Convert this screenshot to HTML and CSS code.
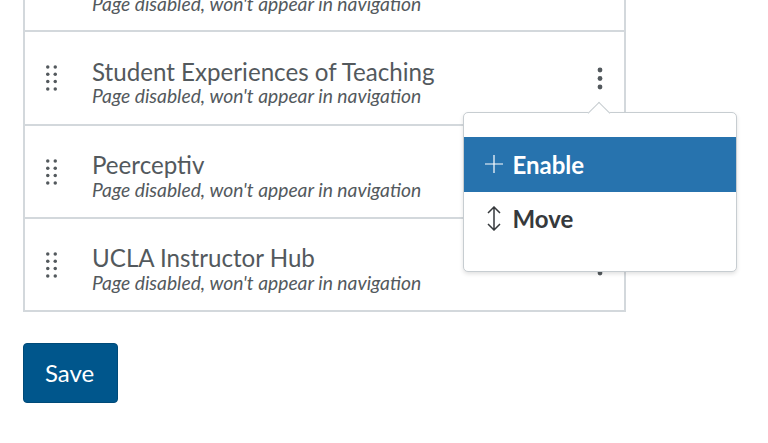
FILE: index.html
```html
<!DOCTYPE html>
<html lang="en">
<head>
<meta charset="utf-8">
<title>Navigation</title>
<link rel="stylesheet" href="styles.css">
</head>
<body>
<main class="page">
  <ul class="nav-list">
    <li class="nav-row nav-row--cut">
      <div class="nav-text"><span class="nav-sub">Page disabled, won't appear in navigation</span></div>
    </li>
    <li class="nav-row nav-row--tall">
      <svg class="grip" viewBox="0 0 11 26" aria-hidden="true"><circle cx="1.750" cy="2" r="1.750"/><circle cx="9.250" cy="2" r="1.750"/><circle cx="1.750" cy="9.300" r="1.750"/><circle cx="9.250" cy="9.300" r="1.750"/><circle cx="1.750" cy="16.600" r="1.750"/><circle cx="9.250" cy="16.600" r="1.750"/><circle cx="1.750" cy="24" r="1.750"/><circle cx="9.250" cy="24" r="1.750"/></svg>
      <div class="nav-text"><span class="nav-title">Student Experiences of Teaching</span><span class="nav-sub">Page disabled, won't appear in navigation</span></div>
      <svg class="kebab" viewBox="0 0 6 24" aria-hidden="true"><circle cx="3" cy="3" r="2.400"/><circle cx="3" cy="11.500" r="2.400"/><circle cx="3" cy="20" r="2.400"/></svg>
    </li>
    <li class="nav-row">
      <svg class="grip" viewBox="0 0 11 26" aria-hidden="true"><circle cx="1.750" cy="2" r="1.750"/><circle cx="9.250" cy="2" r="1.750"/><circle cx="1.750" cy="9.300" r="1.750"/><circle cx="9.250" cy="9.300" r="1.750"/><circle cx="1.750" cy="16.600" r="1.750"/><circle cx="9.250" cy="16.600" r="1.750"/><circle cx="1.750" cy="24" r="1.750"/><circle cx="9.250" cy="24" r="1.750"/></svg>
      <div class="nav-text"><span class="nav-title">Peerceptiv</span><span class="nav-sub">Page disabled, won't appear in navigation</span></div>
      <svg class="kebab" viewBox="0 0 6 24" aria-hidden="true"><circle cx="3" cy="3" r="2.400"/><circle cx="3" cy="11.500" r="2.400"/><circle cx="3" cy="20" r="2.400"/></svg>
    </li>
    <li class="nav-row">
      <svg class="grip" viewBox="0 0 11 26" aria-hidden="true"><circle cx="1.750" cy="2" r="1.750"/><circle cx="9.250" cy="2" r="1.750"/><circle cx="1.750" cy="9.300" r="1.750"/><circle cx="9.250" cy="9.300" r="1.750"/><circle cx="1.750" cy="16.600" r="1.750"/><circle cx="9.250" cy="16.600" r="1.750"/><circle cx="1.750" cy="24" r="1.750"/><circle cx="9.250" cy="24" r="1.750"/></svg>
      <div class="nav-text"><span class="nav-title">UCLA Instructor Hub</span><span class="nav-sub">Page disabled, won't appear in navigation</span></div>
      <svg class="kebab" viewBox="0 0 6 24" aria-hidden="true"><circle cx="3" cy="3" r="2.400"/><circle cx="3" cy="11.500" r="2.400"/><circle cx="3" cy="20" r="2.400"/></svg>
    </li>
  </ul>
  <button class="save" type="button">Save</button>
</main>
<div class="menu" role="menu">
  <span class="menu-arrow"></span>
  <div class="menu-item menu-item--active">
    <svg class="menu-icon" viewBox="0 0 18 18" aria-hidden="true"><path d="M9 0v18M0 9h18"/></svg>
    <span>Enable</span>
  </div>
  <div class="menu-item">
    <svg class="menu-icon menu-icon--move" viewBox="0 0 14 25" aria-hidden="true"><path d="M7 1v23M1 7l6-6 6 6M1 18l6 6 6-6"/></svg>
    <span>Move</span>
  </div>
</div>
</body>
</html>
```
FILE: styles.css
```css
html, body {
  margin: 0;
  padding: 0;
  height: 443px;
  overflow: hidden;
  background: #fff;
  font-family: "Lato", "Liberation Sans", sans-serif;
}
.page {
  padding: 0 23px;
  display: flex;
  flex-direction: column;
  align-items: flex-start;
}
.nav-list {
  list-style: none;
  margin: 0;
  padding: 0;
  width: 603px;
  border: 2px solid #d3d8dc;
  border-top: 0;
  box-sizing: border-box;
}
.nav-row {
  height: 93px;
  box-sizing: border-box;
  border-bottom: 2px solid #d3d8dc;
  display: flex;
  align-items: center;
  padding: 0 21px;
  color: #53595d;
}
.nav-row--tall { height: 94px; }
.nav-row--tall .nav-title { line-height: 25px; margin-top: 1px; }
.nav-row:last-child { border-bottom: 0; height: 91px; }
.nav-row--cut {
  height: 32px;
  align-items: flex-end;
  padding-left: 67px;
  padding-bottom: 15px;
}
.grip {
  width: 11px;
  height: 26px;
  fill: #53595d;
  flex: none;
}
.nav-text {
  display: flex;
  flex-direction: column;
  flex: 1;
  margin-left: 35px;
  padding-top: 9px;
}
.nav-row--cut .nav-text { margin-left: 0; padding-top: 0; }
.nav-title {
  font-size: 24.150px;
  line-height: 26px;
}
.nav-sub {
  font-size: 19.270px;
  line-height: 23px;
  font-style: italic;
}
.kebab {
  width: 6px;
  height: 24px;
  margin-top: 1px;
  fill: #53595d;
  flex: none;
}
.save {
  margin-top: 31px;
  width: 95px;
  height: 60px;
  background: #00568c;
  color: #fff;
  border: 1px solid #004a78;
  border-radius: 4px;
  font: 400 24px "Lato", "Liberation Sans", sans-serif;
  padding: 0 2px 2px 0;
}
.menu {
  position: absolute;
  left: 463px;
  top: 112px;
  width: 274px;
  height: 160px;
  box-sizing: border-box;
  padding: 24px 0 0;
  background: #fff;
  border: 1px solid #c7cdd1;
  border-radius: 5px;
  box-shadow: 0 2px 4px rgba(0,0,0,.12);
}
.menu-arrow {
  position: absolute;
  left: 127px;
  top: -8px;
  width: 16px;
  height: 16px;
  background: #fff;
  border-left: 1px solid #c7cdd1;
  border-top: 1px solid #c7cdd1;
  transform: rotate(45deg);
  box-sizing: border-box;
}
.menu-item {
  height: 54px;
  display: flex;
  align-items: center;
  padding-left: 21px;
  font-size: 24px;
  font-weight: 700;
  color: #36393c;
}
.menu-item--active {
  height: 55px;
  margin-bottom: -1px;
  padding-bottom: 1px;
  box-sizing: border-box;
  background: #2773ae;
  color: #fff;
}
.menu-icon {
  width: 18px;
  height: 18px;
  margin-right: 9.500px;
  fill: none;
  stroke: currentColor;
  stroke-width: 1.200;
  flex: none;
}
.menu-icon--move {
  width: 14px;
  height: 25px;
  margin: 0 11.500px 0 2px;
  stroke-width: 1.500;
}
```
